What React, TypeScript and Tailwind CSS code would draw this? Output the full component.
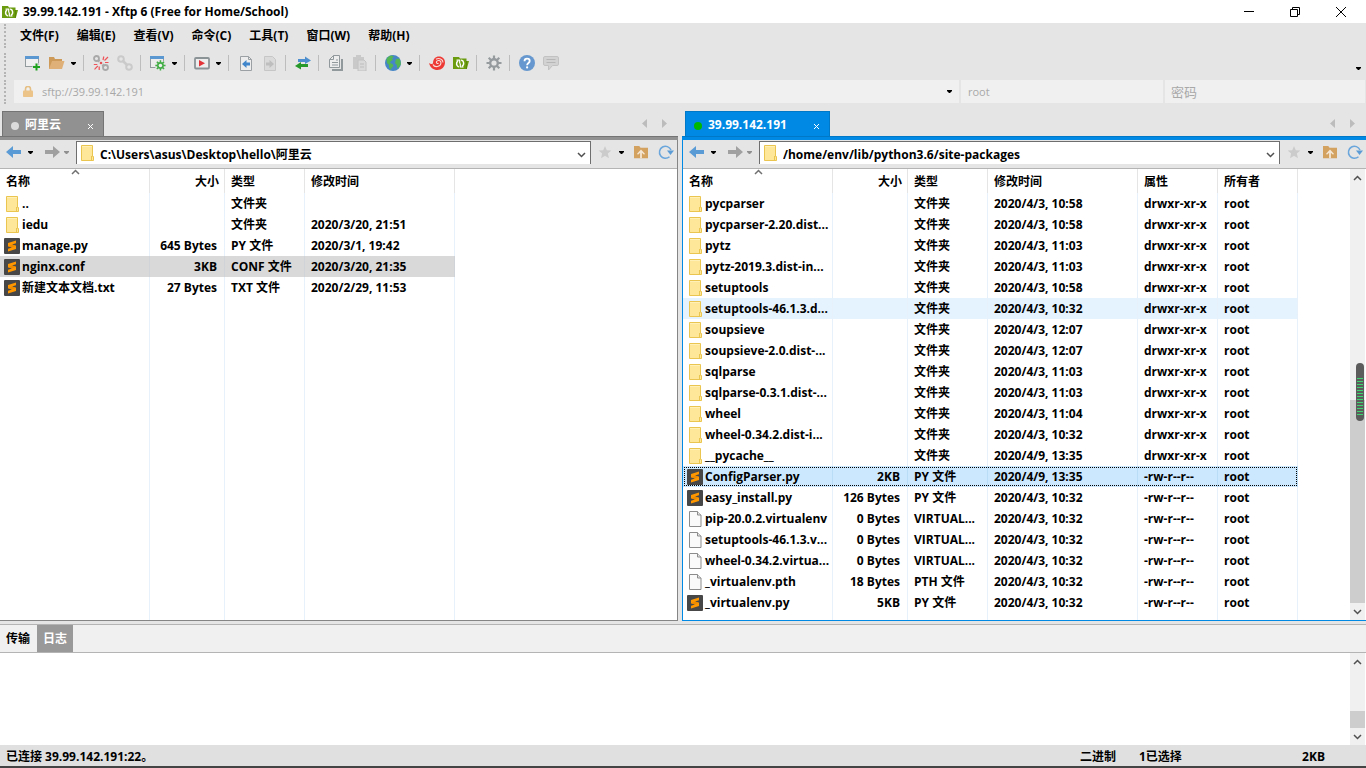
import type { ReactNode } from "react";
import clsx from "clsx";

type FileKind = "folder" | "sublime" | "page";

type Row = {
  kind: FileKind;
  name: string;
  size?: string;
  type: string;
  time?: string;
  attr?: string;
  owner?: string;
  state?: "selected" | "hover" | "inactive";
};

const DIR = "文件夹";

const localRows: Row[] = [
  { kind: "folder", name: "..", type: DIR },
  { kind: "folder", name: "iedu", type: DIR, time: "2020/3/20, 21:51" },
  { kind: "sublime", name: "manage.py", size: "645 Bytes", type: "PY 文件", time: "2020/3/1, 19:42" },
  { kind: "sublime", name: "nginx.conf", size: "3KB", type: "CONF 文件", time: "2020/3/20, 21:35", state: "inactive" },
  { kind: "sublime", name: "新建文本文档.txt", size: "27 Bytes", type: "TXT 文件", time: "2020/2/29, 11:53" },
];

const dir = (name: string, time: string, state?: Row["state"]): Row => ({
  kind: "folder",
  name,
  type: DIR,
  time,
  attr: "drwxr-xr-x",
  owner: "root",
  state,
});

const file = (kind: FileKind, name: string, size: string, type: string, time: string, state?: Row["state"]): Row => ({
  kind,
  name,
  size,
  type,
  time,
  attr: "-rw-r--r--",
  owner: "root",
  state,
});

const remoteRows: Row[] = [
  dir("pycparser", "2020/4/3, 10:58"),
  dir("pycparser-2.20.dist...", "2020/4/3, 10:58"),
  dir("pytz", "2020/4/3, 11:03"),
  dir("pytz-2019.3.dist-in...", "2020/4/3, 11:03"),
  dir("setuptools", "2020/4/3, 10:58"),
  dir("setuptools-46.1.3.d...", "2020/4/3, 10:32", "hover"),
  dir("soupsieve", "2020/4/3, 12:07"),
  dir("soupsieve-2.0.dist-...", "2020/4/3, 12:07"),
  dir("sqlparse", "2020/4/3, 11:03"),
  dir("sqlparse-0.3.1.dist-...", "2020/4/3, 11:03"),
  dir("wheel", "2020/4/3, 11:04"),
  dir("wheel-0.34.2.dist-i...", "2020/4/3, 10:32"),
  dir("__pycache__", "2020/4/9, 13:35"),
  file("sublime", "ConfigParser.py", "2KB", "PY 文件", "2020/4/9, 13:35", "selected"),
  file("sublime", "easy_install.py", "126 Bytes", "PY 文件", "2020/4/3, 10:32"),
  file("page", "pip-20.0.2.virtualenv", "0 Bytes", "VIRTUAL...", "2020/4/3, 10:32"),
  file("page", "setuptools-46.1.3.v...", "0 Bytes", "VIRTUAL...", "2020/4/3, 10:32"),
  file("page", "wheel-0.34.2.virtua...", "0 Bytes", "VIRTUAL...", "2020/4/3, 10:32"),
  file("page", "_virtualenv.pth", "18 Bytes", "PTH 文件", "2020/4/3, 10:32"),
  file("sublime", "_virtualenv.py", "5KB", "PY 文件", "2020/4/3, 10:32"),
];

/* ---------- icons ---------- */

function Svg({ children, className = "w-4 h-4" }: { children: ReactNode; className?: string }) {
  return (
    <svg viewBox="0 0 16 16" className={clsx("shrink-0", className)} fill="none" aria-hidden="true">
      {children}
    </svg>
  );
}

function Caret({ className = "text-black" }: { className?: string }) {
  return (
    <svg viewBox="0 0 5 3" className={clsx("w-[5px] h-[3px] shrink-0", className)} aria-hidden="true">
      <path d="M0 0h5v1L3 3H2L0 1z" fill="currentColor" />
    </svg>
  );
}

function Chevron({ up, className = "w-[9px] text-[#505050]" }: { up?: boolean; className?: string }) {
  return (
    <svg viewBox="0 0 9 6" className={clsx("shrink-0", className)} fill="none" aria-hidden="true">
      <path d={up ? "M1 5l3.500-3.500L8 5" : "M1 1l3.500 3.500L8 1"} stroke="currentColor" strokeWidth="1.500" />
    </svg>
  );
}

function FolderIcon() {
  return (
    <svg viewBox="0 0 13 16" className="w-[13px] h-4 shrink-0" aria-hidden="true">
      <path d="M.5.5h11v11h1v4H.5z" fill="#ffe79a" stroke="#eac54f" />
      <path d="M10.500 11v4.500" stroke="#eac54f" />
      <path d="M1 1h10v1H1z" fill="#fff0b8" />
    </svg>
  );
}

function PageIcon() {
  return (
    <svg viewBox="0 0 13 16" className="w-[13px] h-4 shrink-0" aria-hidden="true">
      <path d="M.5.5h8l3.500 3.500v11.500H.5z" fill="#fafafa" stroke="#8c8c8c" />
      <path d="M8.500.5V4H12" fill="#e4e4e4" stroke="#8c8c8c" />
    </svg>
  );
}

function SublimeIcon() {
  return (
    <Svg>
      <rect width="16" height="16" rx="1" fill="#474747" />
      <path d="M12 2.500v2.800L8 6.500l4 1.300v3.300L4 13.500v-2.800l4-1.200-4-1.300V4.900z" fill="#ff9800" />
      <path d="M8 6.500l4 1.300-4 1.700-4-1.300z" fill="#ec8a00" />
    </Svg>
  );
}

function FileIcon({ kind }: { kind: FileKind }) {
  if (kind === "sublime") return <span className="-ml-0.5 flex w-[18px]"><SublimeIcon /></span>;
  return <span className="flex w-4">{kind === "folder" ? <FolderIcon /> : <PageIcon />}</span>;
}

function XftpIcon() {
  return (
    <Svg>
      <path d="M0 2h6l1 1.500h6.500V6H16l-2.200 8H0z" fill="#6b9b0e" />
      <path d="M13.500 6v8" stroke="#4f7a05" strokeWidth=".6" />
      <path d="M5.800 12A3.600 3.600 0 0 1 5 5.800M8.200 5A3.600 3.600 0 0 1 9 11.500" stroke="#fff" strokeWidth="1.500" />
      <path d="M3.500 5.200h3.200v3.400M10.500 12H7.300V8.500" stroke="#fff" strokeWidth="1.200" />
    </Svg>
  );
}

const NewIcon = () => (
  <Svg>
    <rect x=".5" y="1.500" width="13" height="10" fill="#f0f0f0" stroke="#929a9e" />
    <path d="M0 1h14v3H0z" fill="#5b97d0" />
    <path d="M11.500 8v8M7.500 12h8" stroke="#e5e5e5" strokeWidth="4" />
    <path d="M11.500 8.500v7M8 12h7" stroke="#1fa31f" strokeWidth="2" />
  </Svg>
);

const OpenIcon = () => (
  <Svg>
    <path d="M0 2h5l1 2h7v10H0z" fill="#ce9a59" />
    <path d="M3 6h12.500L13 14H0z" fill="#dfb077" />
  </Svg>
);

const BrokenLinkIcon = () => (
  <Svg>
    <circle cx="3.500" cy="3.500" r="2.500" stroke="#a9a9a9" strokeWidth="1.800" />
    <circle cx="12.500" cy="12.500" r="2.500" stroke="#a9a9a9" strokeWidth="1.800" />
    <path d="M5 5l1.500 1.500M9.500 9.500L11 11" stroke="#a9a9a9" strokeWidth="2.500" />
    <path d="M10 5l.8-3.500M11.500 5.500L15 2M12 7.500h3.500M.8 9.500h3.500M4.800 11l-3.300 3.300M6.200 11.500V15" stroke="#ed5358" strokeWidth="1.200" />
    <circle cx="8" cy="8" r="1.300" fill="#e55055" />
  </Svg>
);

const LinkIcon = () => (
  <Svg>
    <circle cx="4" cy="4" r="2.800" stroke="#cacaca" strokeWidth="2" />
    <circle cx="12" cy="12" r="2.800" stroke="#cacaca" strokeWidth="2" />
    <path d="M5.500 5.500l5 5" stroke="#cacaca" strokeWidth="2.500" />
  </Svg>
);

const Cog = ({ color, hole }: { color: string; hole: string }) => (
  <>
    <circle cx="8" cy="8" r="5" fill={color} />
    <path d="M8 .5v15M.5 8h15M2.700 2.700l10.600 10.600M13.300 2.700L2.700 13.300" stroke={color} strokeWidth="2.200" />
    <circle cx="8" cy="8" r="2.600" fill={hole} />
  </>
);

const PropertiesIcon = () => (
  <Svg>
    <rect x=".5" y="1.500" width="13" height="11" fill="#ededed" stroke="#929a9e" />
    <path d="M0 1h14v3H0z" fill="#5b97d0" />
    <circle cx="10.500" cy="10.500" r="5.500" fill="#e5e5e5" />
    <g transform="translate(5 5) scale(.68)">
      <Cog color="#43ad46" hole="#f0f0f0" />
    </g>
  </Svg>
);

const RunIcon = () => (
  <Svg>
    <rect x="1" y="3" width="14" height="10.500" rx="1" fill="#ededed" stroke="#8b9397" strokeWidth="1.800" />
    <path d="M5 5l6 3.200-6 3.200z" fill="#e23339" />
  </Svg>
);

const UploadIcon = () => (
  <Svg>
    <path d="M2.500 1.500h8l3 3v11h-11z" fill="#ededed" stroke="#9aa0a3" />
    <path d="M10.500 1.500v3h3" stroke="#9aa0a3" />
    <path d="M4 9l4.500-4v2.500H12v3H8.500V13z" fill="#3f86cb" />
  </Svg>
);

const DownloadIcon = () => (
  <Svg>
    <path d="M2.500 1.500h8l3 3v11h-11z" fill="#dadada" stroke="#c6c6c6" />
    <path d="M12 9L7.500 5v2.500H4v3h3.500V13z" fill="#bebebe" />
  </Svg>
);

const TransferIcon = () => (
  <Svg>
    <path d="M3 4h7V1.500L16 5.500 10 9V7H3z" fill="#4d8fce" />
    <path d="M13 9H6V7l-6 4 6 3.500V12h7z" fill="#27982a" />
  </Svg>
);

const CopyIcon = () => (
  <Svg>
    <path d="M4 15h10V4" stroke="#92999d" strokeWidth="2" />
    <path d="M5.500.5h6v12h-10v-8z" fill="#ededed" stroke="#92999d" />
    <path d="M5.500.5v4h-4M4 7.500h6M4 10h6M8 5h2" stroke="#92999d" />
  </Svg>
);

const PasteIcon = () => (
  <Svg>
    <path d="M1 2h3V0h5v2h3v12H1z" fill="#c9c9c9" />
    <path d="M6 5h6l2 2v9H6z" fill="#d9d9d9" stroke="#c2c2c2" />
    <path d="M8 9h4M8 12h4" stroke="#bdbdbd" />
  </Svg>
);

const GlobeIcon = () => (
  <Svg>
    <circle cx="8" cy="8" r="8" fill="#4686c6" />
    <path d="M1.500 4C3 1.500 5 .5 7 .5l2 1.500-2 1 1 2-2 1-1 2 2.500 1 1 2-2 2-.5 2-2-2.500V10L2 8zM11 4l3.500-.5 1 3 .3 3-2 3-1.500 1-.5-3.500L10 8z" fill="#53b653" />
  </Svg>
);

const SwirlIcon = () => (
  <Svg>
    <path d="M0 8c2 1.500 3.500 1 4 .5C4 4 6.500 1.500 10 1.500c3.500 0 6 2.500 6 6C16 12 12.500 15 8.500 15 4.500 15 1 12.500 0 8z" fill="#ee3a35" />
    <path d="M4 9.500c1.500 3.500 7.500 2.500 8-1.500.2-2.500-3.500-3.500-4.500-1.300-.5 1.300 1 2.300 2 1.500M7 4.300C10 2.500 14 4 14 7.500" stroke="#f7dcd9" strokeWidth="1.100" />
  </Svg>
);

const GearIcon = () => (
  <Svg>
    <Cog color="#969b9e" hole="#e5e5e5" />
  </Svg>
);

const HelpIcon = () => (
  <Svg>
    <circle cx="8" cy="8" r="8" fill="#6698cf" />
    <path d="M5.500 6.200C5.500 2.800 10.700 3 10.700 6c0 2-2.600 2-2.600 4.200" stroke="#fff" strokeWidth="1.800" />
    <circle cx="8.100" cy="12.400" r="1.100" fill="#fff" />
  </Svg>
);

const ChatIcon = () => (
  <Svg>
    <path d="M2 1.500h12q1.500 0 1.500 1.500v6q0 1.500-1.500 1.500H9.500L5.500 15v-4.500H2Q.5 10.500.5 9V3Q.5 1.500 2 1.500z" fill="#d2d2d2" stroke="#c2c2c2" />
    <path d="M3.500 4.500h9M3.500 7.500h9" stroke="#b6b6b6" />
  </Svg>
);

const LockIcon = () => (
  <svg viewBox="0 0 10 11" className="w-2.5 h-[11px] shrink-0" fill="none" aria-hidden="true">
    <path d="M2.500 5V3a2.500 2.500 0 0 1 5 0v2" stroke="#e5bf84" strokeWidth="1.600" />
    <rect y="4.500" width="10" height="6.500" rx=".8" fill="#ecc48a" />
  </svg>
);

function ArrowIcon({ right }: { right?: boolean }) {
  return (
    <Svg className={right ? "w-4 h-4 rotate-180 text-[#a0a0a0]" : "w-4 h-4 text-[#5b9bd5]"}>
      <path d="M0 8l7-6v4h8v4H7v4z" fill="currentColor" />
    </Svg>
  );
}

const StarIcon = () => (
  <Svg className="w-3.5 h-3.5">
    <path d="M8 1l2 4.900 5.300.4-4 3.500 1.200 5.200L8 12.200 3.500 15l1.200-5.200-4-3.500L6 5.900z" fill="#cbcbcb" />
  </Svg>
);

const UpFolderIcon = () => (
  <Svg className="w-3.5 h-3.5">
    <path d="M0 1h6l1.500 2H16v12H0z" fill="#d3a160" />
    <path d="M8 5l4.500 5-1 1L9 8.800V15H7V8.800L4.500 11l-1-1z" fill="#f5e7d5" />
  </Svg>
);

const RefreshIcon = () => (
  <Svg>
    <path d="M11.500 12.700A6 6 0 1 1 13 6" stroke="#6aa6db" strokeWidth="1.500" />
    <path d="M9 6.500h7L12.500 11z" fill="#5b9bd5" />
  </Svg>
);

/* ---------- chrome ---------- */

function Grip({ className }: { className: string }) {
  return <span className={clsx("ml-1 shrink-0 border-l-2 border-dotted border-[#b4b4b4]", className)} />;
}

function TitleBar() {
  return (
    <header className="flex h-[23px] items-center bg-white pl-0.5 pr-0.5">
      <XftpIcon />
      <h1 className="ml-[5px] flex-1">39.99.142.191 - Xftp 6 (Free for Home/School)</h1>
      <button aria-label="最小化" className="flex h-5 w-[46px] items-center justify-center">
        <span className="h-px w-2.5 bg-black" />
      </button>
      <button aria-label="还原" className="flex h-5 w-[46px] items-center justify-center">
        <svg viewBox="0 0 10 10" className="h-2.5 w-2.5" fill="none" stroke="#000">
          <path d="M.5 2.500h7v7h-7zM2.500 2.500v-2h7v7h-2" />
        </svg>
      </button>
      <button aria-label="关闭" className="flex h-5 w-[46px] items-center justify-center">
        <svg viewBox="0 0 10 10" className="h-2.5 w-2.5" stroke="#000">
          <path d="M0 0l10 10M10 0L0 10" />
        </svg>
      </button>
    </header>
  );
}

const menus = ["文件(F)", "编辑(E)", "查看(V)", "命令(C)", "工具(T)", "窗口(W)", "帮助(H)"];

function MenuBar() {
  return (
    <nav className="flex h-[26px] items-center">
      <Grip className="h-6" />
      <div className="ml-3.5 flex gap-[18px]">
        {menus.map((m) => (
          <button key={m}>{m}</button>
        ))}
      </div>
    </nav>
  );
}

type Tool = { label: string; icon: ReactNode; menu?: boolean };

const toolGroups: Tool[][] = [
  [{ label: "新建", icon: <NewIcon /> }, { label: "打开", icon: <OpenIcon />, menu: true }],
  [{ label: "断开", icon: <BrokenLinkIcon /> }, { label: "重新连接", icon: <LinkIcon /> }],
  [{ label: "属性", icon: <PropertiesIcon />, menu: true }],
  [{ label: "运行", icon: <RunIcon />, menu: true }],
  [{ label: "上传", icon: <UploadIcon /> }, { label: "下载", icon: <DownloadIcon /> }],
  [{ label: "同步", icon: <TransferIcon /> }],
  [{ label: "复制", icon: <CopyIcon /> }, { label: "粘贴", icon: <PasteIcon /> }],
  [{ label: "语言", icon: <GlobeIcon />, menu: true }],
  [{ label: "Xshell", icon: <SwirlIcon /> }, { label: "Xftp", icon: <XftpIcon /> }],
  [{ label: "选项", icon: <GearIcon /> }],
  [{ label: "帮助", icon: <HelpIcon /> }, { label: "反馈", icon: <ChatIcon /> }],
];

function ToolBar() {
  return (
    <div className="flex h-[31px] items-center">
      <Grip className="h-6" />
      <div className="ml-[15px] flex flex-1 pb-[3px]">
        {toolGroups.map((group, i) => (
          <div key={i} className="flex items-center">
            {i > 0 && <span className="ml-[3px] mr-[5px] h-4 w-px bg-[#bdbdbd]" />}
            {group.map((t) => (
              <button key={t.label} aria-label={t.label} className={clsx("flex h-6 items-center pl-1", !t.menu && "pr-1")}>
                {t.icon}
                {t.menu && <span className="ml-1.5 flex w-[9px]"><Caret /></span>}
              </button>
            ))}
          </div>
        ))}
      </div>
      <button aria-label="工具栏选项" className="mt-2 p-1 pr-[5px]">
        <Caret />
      </button>
    </div>
  );
}

function AddressBar() {
  const box = "h-[23px] bg-[#f0f0f0] text-[#a8a8a8]";
  return (
    <div className="flex h-[31px] items-start pr-px">
      <Grip className="h-6" />
      <div className={clsx(box, "ml-2 flex flex-1 items-center pl-[9px] pr-[7px]")}>
        <LockIcon />
        <input
          aria-label="主机"
          defaultValue="sftp://39.99.142.191"
          className="ml-[9px] mt-0.5 min-w-0 flex-1 text-[11px] font-normal outline-none"
        />
        <button aria-label="历史" className="flex text-black">
          <Caret />
        </button>
      </div>
      <input aria-label="用户名" defaultValue="root" className={clsx(box, "ml-0.5 w-[202px] px-[7px] text-[11px] font-normal outline-none")} />
      <input
        aria-label="密码"
        placeholder="密码"
        className={clsx(box, "ml-0.5 w-[200px] px-1.5 text-[13px] font-normal outline-none placeholder:text-[#a8a8a8]")}
      />
    </div>
  );
}

function ScrollBar({ track, thumb }: { track: string; thumb: string }) {
  return (
    <div className="mr-px flex w-[15px] shrink-0 flex-col bg-[#f0f0f0]">
      <button aria-label="向上滚动" className="flex h-[17px] shrink-0 items-center justify-center">
        <Chevron up />
      </button>
      <span className={track} />
      <span className={clsx("bg-[#cdcdcd]", thumb)} />
      <button aria-label="向下滚动" className="flex h-[17px] shrink-0 items-center justify-center">
        <Chevron />
      </button>
    </div>
  );
}

/* ---------- file panes ---------- */

const columns = [
  { key: "name", label: "名称", width: "w-[150px]" },
  { key: "size", label: "大小", width: "w-[75px]" },
  { key: "type", label: "类型", width: "w-20" },
  { key: "time", label: "修改时间", width: "w-[150px]" },
  { key: "attr", label: "属性", width: "w-20" },
  { key: "owner", label: "所有者", width: "w-20" },
] as const;

function FileTable({ rows, count }: { rows: Row[]; count: number }) {
  const cols = columns.slice(0, count);
  return (
    <table className="table-fixed border-separate border-spacing-0">
      <thead>
        <tr className="h-6">
          {cols.map((c) => (
            <th
              key={c.key}
              className={clsx(
                "relative border-r border-[#e5e5e5] p-0 pt-px font-bold",
                c.width,
                c.key === "size" ? "pr-[5px] text-right" : "pl-1.5 text-left",
              )}
            >
              {c.label}
              {c.key === "name" && <Chevron up className="absolute left-[71px] top-0 w-[9px] text-[#707070]" />}
            </th>
          ))}
        </tr>
      </thead>
      <tbody>
        {rows.map((r) => (
          <tr
            key={r.name}
            className={clsx(
              "h-[21px]",
              r.state === "selected" && "bg-[#cce8ff] outline-1 -outline-offset-2 outline-dotted outline-black",
              r.state === "hover" && "bg-[#e5f3ff]",
              r.state === "inactive" && "bg-[#d9d9d9]",
            )}
          >
            {cols.map((c) => (
              <td
                key={c.key}
                className={clsx(
                  "whitespace-nowrap border-r p-0 leading-5",
                  r.state === "inactive" ? "border-[#d0d4d9]" : r.state === "selected" ? "border-[#b9dcf7]" : "border-[#e6f1fb]",
                  c.key === "size" ? "pr-[7px] text-right" : "pl-1.5",
                )}
              >
                {c.key === "name" ? (
                  <span className="flex items-center">
                    <FileIcon kind={r.kind} />
                    {r.name}
                  </span>
                ) : (
                  r[c.key]
                )}
              </td>
            ))}
          </tr>
        ))}
        <tr aria-hidden="true">
          {cols.map((c) => (
            <td key={c.key} className="border-r border-[#e6f1fb] p-0" />
          ))}
        </tr>
      </tbody>
    </table>
  );
}

type PaneProps = {
  title: string;
  path: string;
  rows: Row[];
  columnCount: number;
  active?: boolean;
  children?: ReactNode;
};

function Pane({ title, path, rows, columnCount, active, children }: PaneProps) {
  return (
    <section className="flex min-w-0 flex-col">
      <div className="flex h-[25px] items-stretch">
        <div
          className={clsx(
            "flex items-center border border-b-0 pl-2 pr-2 text-white",
            active ? "ml-[3px] w-[145px] border-[#0078c8] bg-[#0089e4]" : "ml-0.5 w-[102px] border-[#747474] bg-[#919191]",
          )}
        >
          <span className={clsx("mt-1 h-2 w-2 rounded-full", active ? "bg-[#00b800]" : "bg-[#dcdcdc]")} />
          <button className="ml-1.5 mt-px flex-1 text-left">{title}</button>
          <button aria-label="关闭标签" className="mt-1 p-0.5">
            <svg viewBox="0 0 5 5" className="h-[5px] w-[5px]" stroke="#fff">
              <path d="M0 0l5 5M5 0L0 5" />
            </svg>
          </button>
        </div>
        <div className="flex flex-1 items-center justify-end gap-[15px] pr-[11px] text-[#bcbcbc]">
          <button aria-label="上一个标签">
            <svg viewBox="0 0 5 9" className="h-[9px] w-[5px]"><path d="M5 0v9L0 4.500z" fill="currentColor" /></svg>
          </button>
          <button aria-label="下一个标签">
            <svg viewBox="0 0 5 9" className="h-[9px] w-[5px]"><path d="M0 0v9l5-4.500z" fill="currentColor" /></svg>
          </button>
        </div>
      </div>
      <div className={clsx("h-1 border-t", active ? "border-[#0078c8] bg-[#0089e4]" : "border-[#747474] bg-[#919191]")} />
      <div
        className={clsx(
          "flex flex-1 flex-col border-b",
          active ? "border-l border-[#0089e4]" : "border-r border-[#858585]",
        )}
      >
        <div className="flex h-[29px] items-start border-b border-[#b4b4b4] bg-[#e5e5e5] pt-px">
          <div className="flex h-[22px] w-[76px] shrink-0 items-center pl-1.5">
            <button aria-label="后退" className="flex items-center gap-1.5">
              <ArrowIcon />
              <Caret />
            </button>
            <button aria-label="前进" className="ml-[11px] flex items-center gap-1">
              <ArrowIcon right />
              <Caret className="text-[#909090]" />
            </button>
          </div>
          <div className="flex h-[23px] min-w-0 flex-1 items-center border border-b-0 border-[#6e6e6e] bg-white pl-1 pr-1">
            <FolderIcon />
            <input aria-label="路径" defaultValue={path} className="ml-1.5 mt-1 min-w-0 flex-1 font-bold outline-none" />
            <button aria-label="路径历史" className="mt-1 flex">
              <Chevron />
            </button>
          </div>
          <div className="flex h-[22px] w-[86px] shrink-0 items-center pl-[7px]">
            <button aria-label="收藏" className="flex items-center gap-[7px]">
              <StarIcon />
              <Caret />
            </button>
            <button aria-label="上级目录" className="ml-2.5">
              <UpFolderIcon />
            </button>
            <button aria-label="刷新" className="ml-2.5">
              <RefreshIcon />
            </button>
          </div>
        </div>
        <div className="relative flex flex-1 bg-white">
          <FileTable rows={rows} count={columnCount} />
          <span className="flex-1" />
          {children}
        </div>
      </div>
    </section>
  );
}

function LevelMeter() {
  return (
    <div className="absolute right-0.5 top-[194px] flex h-[58px] w-2 flex-col gap-px rounded-full bg-[#5c5c5c] px-px pt-3.5 pb-1">
      {Array.from({ length: 13 }, (_, i) => (
        <span key={i} className="h-0.5 border-b border-[#3fd671]" />
      ))}
    </div>
  );
}

export default function App() {
  return (
    <div className="flex min-h-screen flex-col bg-[#e5e5e5] font-['Open_Sans','Noto_Sans_CJK_SC',sans-serif] text-xs font-bold text-black">
      <TitleBar />
      <MenuBar />
      <ToolBar />
      <AddressBar />
      <main className="grid flex-1 grid-cols-[678fr_684fr] gap-x-1">
        <Pane title="阿里云" path="C:\Users\asus\Desktop\hello\阿里云" rows={localRows} columnCount={4} />
        <Pane title="39.99.142.191" path="/home/env/lib/python3.6/site-packages" rows={remoteRows} columnCount={6} active>
          <ScrollBar track="grow-[214]" thumb="grow-[203]" />
          <LevelMeter />
        </Pane>
      </main>
      <section className="mt-[3px]">
        <div className="flex h-[29px] border-y border-[#b4b4b4] bg-[#f0f0f0]">
          <button className="px-1.5">传输</button>
          <button className="ml-px bg-[#999] px-1.5 text-white">日志</button>
        </div>
        <div className="flex h-[92px] bg-white">
          <span className="flex-1" />
          <ScrollBar track="flex-1" thumb="h-[17px]" />
        </div>
      </section>
      <footer className="flex h-[23px] items-center border-b-2 border-[#444] bg-[#e0e0e0] pl-1.5 pr-[41px] pt-0.5">
        <span className="flex-1">已连接 39.99.142.191:22。</span>
        <span className="w-[59px]">二进制</span>
        <span className="w-[120px]">1已选择</span>
        <span className="w-[66px] text-right">2KB</span>
      </footer>
    </div>
  );
}
